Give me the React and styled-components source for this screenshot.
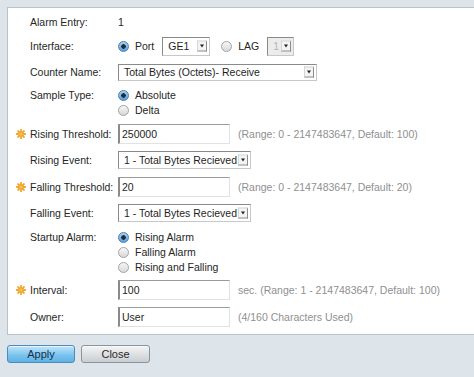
import React from "react";
import styled, { createGlobalStyle } from "styled-components";

const Global = createGlobalStyle`
  html, body { margin: 0; padding: 0; }
  body {
    background: #dde5ea;
    font-family: "Liberation Sans", Arial, Helvetica, sans-serif;
    font-size: 10.5px;
    color: #262626;
    overflow: hidden;
  }
`;

const Page = styled.div`
  width: 474px;
  height: 377px;
  padding: 7px 0 0 7px;
  box-sizing: border-box;
  display: flex;
  flex-direction: column;
`;

const Panel = styled.div`
  background: #fff;
  border: 1px solid #b7c2c9;
  border-right: none;
  padding: 4px 0 4px 6px;
  display: flex;
  flex-direction: column;
`;

const Row = styled.div`
  display: grid;
  grid-template-columns: 16px 88px 1fr;
  align-items: ${(p) => (p.$top ? "start" : "center")};
  height: ${(p) => p.$h}px;
  padding-top: ${(p) => p.$pt || 0}px;
  box-sizing: border-box;
`;

const Mark = styled.div`
  display: flex;
  align-items: center;
  justify-content: flex-start;
  padding-left: 2px;
  height: 15px;
`;

const Label = styled.div`
  line-height: 15px;
  white-space: nowrap;
`;

const Value = styled.div`
  display: flex;
  align-items: center;
  gap: ${(p) => p.$gap ?? 8}px;
  white-space: nowrap;
`;

const RadioList = styled.div`
  display: flex;
  flex-direction: column;
`;

const RadioItem = styled.label`
  display: flex;
  align-items: center;
  gap: 6px;
  height: 15px;
  line-height: 15px;
  margin-left: ${(p) => p.$ml || 0}px;
  margin-right: ${(p) => p.$mr || 0}px;
`;

const RadioDot = styled.span`
  width: 11px;
  height: 11px;
  border-radius: 50%;
  box-sizing: border-box;
  border: 1px solid ${(p) => (p.$on ? "#4a7fb3" : "#a3a3a3")};
  background: ${(p) =>
    p.$on
      ? "radial-gradient(circle, #1d2d3a 0 2px, transparent 2.5px), linear-gradient(#a9cff0, #5d9fd8)"
      : "linear-gradient(#f7f7f7, #d8d8d8)"};
  flex: none;
`;

const SelectBox = styled.div`
  position: relative;
  width: ${(p) => p.$w}px;
  height: ${(p) => p.$h || 17}px;
  box-sizing: border-box;
  border: 1px solid #c8c8c8;
  border-top-color: #8a8a8a;
  border-left-color: #8a8a8a;
  background: ${(p) => (p.$disabled ? "#ececec" : "#fff")};
  color: ${(p) => (p.$disabled ? "#b5b5b5" : "#1e1e1e")};
  display: flex;
  align-items: center;
  padding-left: 5px;
  font-size: 10.5px;
  line-height: 1;
`;

const Arrow = styled.span`
  position: absolute;
  right: 2px;
  top: 50%;
  transform: translateY(-50%);
  width: 10px;
  height: 11px;
  box-sizing: border-box;
  background: #f4f4f4;
  border: 1px solid #d6d6d6;
  border-right-color: #8c8c8c;
  border-bottom-color: #8c8c8c;
  display: flex;
  align-items: center;
  justify-content: center;
  &::after {
    content: "";
    border-left: 2.5px solid transparent;
    border-right: 2.5px solid transparent;
    border-top: 3px solid #222;
  }
`;

const Input = styled.div`
  width: 112px;
  height: 20px;
  box-sizing: border-box;
  border: 1px solid #e2e2e2;
  border-top-color: #9a9a9a;
  border-left: 2px solid #8a8a8a;
  background: #fff;
  display: flex;
  align-items: center;
  padding-left: 2px;
  font-size: 10.5px;
  color: #1e1e1e;
`;

const Hint = styled.span`
  color: #8f8f8f;
  font-size: 10.5px;
`;

const Footer = styled.div`
  display: flex;
  gap: 6px;
  padding-top: 10px;
`;

const Button = styled.div`
  width: ${(p) => p.$w}px;
  height: 18px;
  box-sizing: border-box;
  border-radius: 3px;
  display: flex;
  align-items: center;
  justify-content: center;
  font-size: 11px;
  color: ${(p) => (p.$primary ? "#12314d" : "#2a2a2a")};
  border: 1px solid ${(p) => (p.$primary ? "#4f8bb8" : "#8b949b")};
  background: ${(p) =>
    p.$primary
      ? "linear-gradient(#c3e6fa, #7cc4ee 55%, #5fb2e4)"
      : "linear-gradient(#f3f4f5, #dcdfe2 55%, #c9ced2)"};
  box-shadow: inset 0 1px 0 rgba(255,255,255,0.6);
`;

const Sun = () => (
  <svg width="10" height="10" viewBox="0 0 10 10">
    <g fill="#f0a52a">
      {[0, 45, 90, 135, 180, 225, 270, 315].map((a) => (
        <rect key={a} x="4.1" y="0" width="1.8" height="2.6" rx="0.6" transform={`rotate(${a} 5 5)`} />
      ))}
      <circle cx="5" cy="5" r="3" />
    </g>
    <circle cx="5" cy="5" r="1.6" fill="#f7c35a" />
  </svg>
);

const Select = ({ w, h, children, disabled }) => (
  <SelectBox $w={w} $h={h} $disabled={disabled}>
    {children}
    <Arrow />
  </SelectBox>
);

export default function App() {
  return (
    <>
      <Global />
      <Page>
        <Panel>
          <Row $h={20}>
            <Mark />
            <Label>Alarm Entry:</Label>
            <Value>1</Value>
          </Row>
          <Row $h={28}>
            <Mark />
            <Label>Interface:</Label>
            <Value $gap={0}>
              <RadioItem $mr={8}>
                <RadioDot $on />
                Port
              </RadioItem>
              <Select w={48} h={19}>GE1</Select>
              <RadioItem $ml={11} $mr={8}>
                <RadioDot />
                LAG
              </RadioItem>
              <Select w={27} h={19} disabled>1</Select>
            </Value>
          </Row>
          <Row $h={24}>
            <Mark />
            <Label>Counter Name:</Label>
            <Value>
              <Select w={199} h={17}>Total Bytes (Octets)- Receive</Select>
            </Value>
          </Row>
          <Row $h={36} $top $pt={4}>
            <Mark />
            <Label>Sample Type:</Label>
            <RadioList>
              <RadioItem>
                <RadioDot $on />
                Absolute
              </RadioItem>
              <RadioItem>
                <RadioDot />
                Delta
              </RadioItem>
            </RadioList>
          </Row>
          <Row $h={28}>
            <Mark><Sun /></Mark>
            <Label>Rising Threshold:</Label>
            <Value>
              <Input>250000</Input>
              <Hint>(Range: 0 - 2147483647, Default: 100)</Hint>
            </Value>
          </Row>
          <Row $h={24}>
            <Mark />
            <Label>Rising Event:</Label>
            <Value>
              <Select w={133} h={18}>1 - Total Bytes Recieved</Select>
            </Value>
          </Row>
          <Row $h={30}>
            <Mark><Sun /></Mark>
            <Label>Falling Threshold:</Label>
            <Value>
              <Input>20</Input>
              <Hint>(Range: 0 - 2147483647, Default: 20)</Hint>
            </Value>
          </Row>
          <Row $h={22}>
            <Mark />
            <Label>Falling Event:</Label>
            <Value>
              <Select w={133} h={18}>1 - Total Bytes Recieved</Select>
            </Value>
          </Row>
          <Row $h={52} $top $pt={6}>
            <Mark />
            <Label>Startup Alarm:</Label>
            <RadioList>
              <RadioItem>
                <RadioDot $on />
                Rising Alarm
              </RadioItem>
              <RadioItem>
                <RadioDot />
                Falling Alarm
              </RadioItem>
              <RadioItem>
                <RadioDot />
                Rising and Falling
              </RadioItem>
            </RadioList>
          </Row>
          <Row $h={28}>
            <Mark><Sun /></Mark>
            <Label>Interval:</Label>
            <Value>
              <Input>100</Input>
              <Hint>sec. (Range: 1 - 2147483647, Default: 100)</Hint>
            </Value>
          </Row>
          <Row $h={26}>
            <Mark />
            <Label>Owner:</Label>
            <Value>
              <Input>User</Input>
              <Hint>(4/160 Characters Used)</Hint>
            </Value>
          </Row>
        </Panel>
        <Footer>
          <Button $primary $w={68}>Apply</Button>
          <Button $w={69}>Close</Button>
        </Footer>
      </Page>
    </>
  );
}
